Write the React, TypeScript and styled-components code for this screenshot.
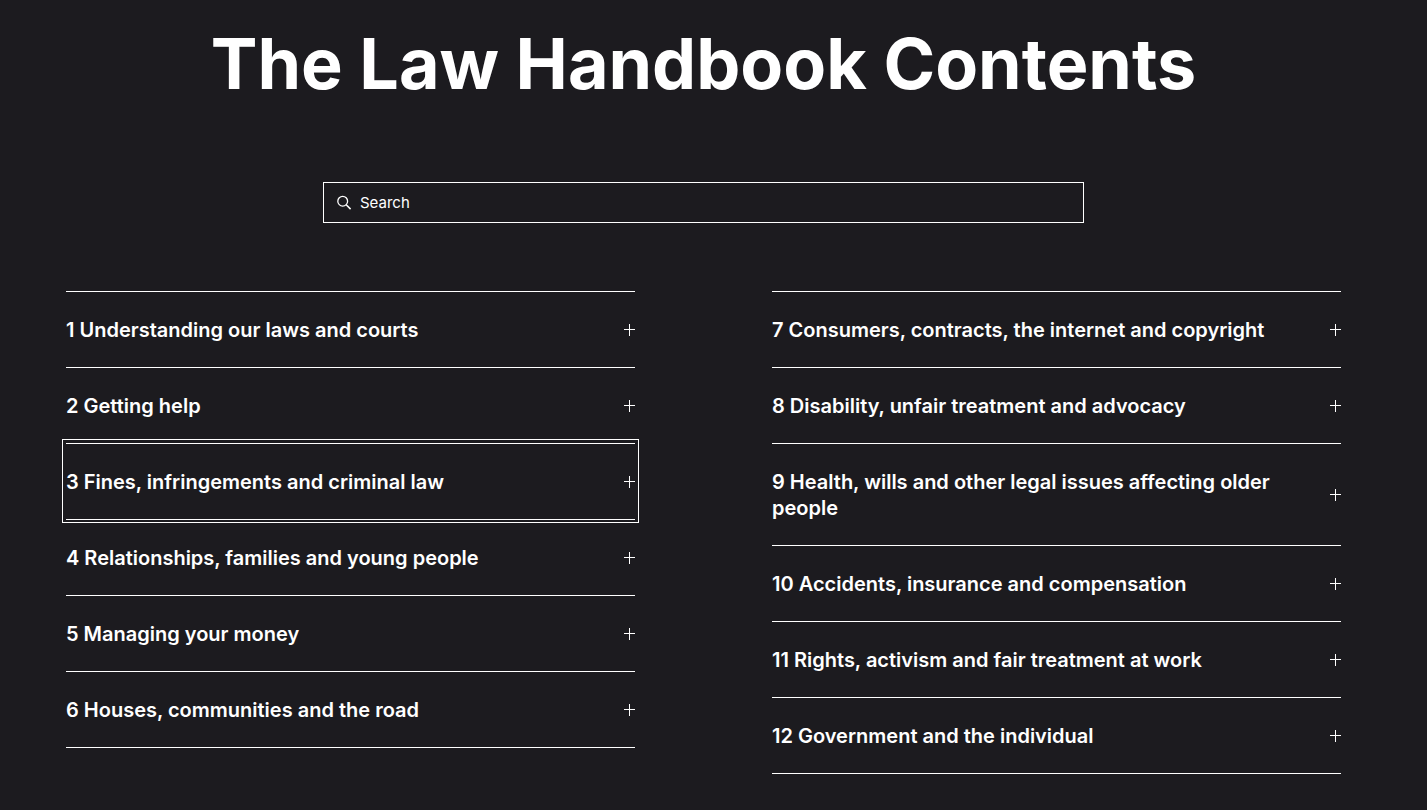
import React, { useState } from "react";
import styled, { createGlobalStyle } from "styled-components";

const GlobalStyle = createGlobalStyle`
  *, *::before, *::after { box-sizing: border-box; }
  body {
    margin: 0;
    background: #1c1b1f;
    color: #fff;
    font-family: Inter, "Liberation Sans", sans-serif;
  }
`;

const Page = styled.main`
  display: flex;
  flex-direction: column;
  align-items: center;
  padding: 24px 86px 36px 66px;
`;

const Title = styled.h1`
  margin: 0;
  font-size: 70px;
  line-height: 80px;
  font-weight: 700;
  text-align: center;
`;

const SearchBox = styled.label`
  display: flex;
  align-items: center;
  gap: 8px;
  width: 100%;
  max-width: 761px;
  height: 41px;
  margin: 78px 0 68px;
  padding: 0 13px;
  border: 1px solid #fff;
`;

const SearchInput = styled.input`
  flex: 1;
  min-width: 0;
  padding: 0;
  border: 0;
  outline: 0;
  background: transparent;
  color: #fff;
  font: 400 15px/24px Inter, "Liberation Sans", sans-serif;
  &::placeholder { color: #fff; opacity: 1; }
`;

const Columns = styled.div`
  display: grid;
  grid-template-columns: 1fr 1fr;
  align-items: start;
  column-gap: 137px;
  width: 100%;
`;

const ChapterList = styled.ul`
  margin: 0;
  padding: 0;
  list-style: none;
  border-bottom: 1px solid #fff;
`;

const ChapterButton = styled.button<{ $current: boolean }>`
  display: flex;
  align-items: center;
  justify-content: space-between;
  gap: 48px;
  width: 100%;
  padding: 25px 0 24px;
  border: 0;
  border-top: 1px solid #fff;
  outline: ${(p) => (p.$current ? "1px solid #fff" : "0")};
  outline-offset: 3px;
  background: transparent;
  color: #fff;
  font: 600 20px/26px Inter, "Liberation Sans", sans-serif;
  text-align: left;
  cursor: pointer;
`;

const PlusIcon = styled.svg`
  flex: none;
  width: 12px;
  height: 12px;
`;

const firstHalf = [
  "1 Understanding our laws and courts",
  "2 Getting help",
  "3 Fines, infringements and criminal law",
  "4 Relationships, families and young people",
  "5 Managing your money",
  "6 Houses, communities and the road",
];

const secondHalf = [
  "7 Consumers, contracts, the internet and copyright",
  "8 Disability, unfair treatment and advocacy",
  "9 Health, wills and other legal issues affecting older people",
  "10 Accidents, insurance and compensation",
  "11 Rights, activism and fair treatment at work",
  "12 Government and the individual",
];

export default function App() {
  const [current, setCurrent] = useState(firstHalf[2]);
  return (
    <>
      <GlobalStyle />
      <Page>
        <Title>The Law Handbook Contents</Title>
        <SearchBox>
          <svg width="15" height="15" viewBox="0 0 15 15" fill="none" stroke="#fff" aria-hidden="true">
            <circle cx="5.7" cy="6.2" r="4.9" strokeWidth="1.3" />
            <path d="M9.2 9.7 L13.6 14.1" strokeWidth="1.5" />
          </svg>
          <SearchInput type="search" placeholder="Search" aria-label="Search" />
        </SearchBox>
        <Columns>
          {[firstHalf, secondHalf].map((chapters) => (
            <ChapterList key={chapters[0]}>
              {chapters.map((name) => (
                <li key={name}>
                  <ChapterButton
                    type="button"
                    $current={name === current}
                    onClick={() => setCurrent(name)}
                  >
                    <span>{name}</span>
                    <PlusIcon viewBox="0 0 12 12" stroke="#fff" aria-hidden="true">
                      <path d="M0.5 5.5H12M6 0V11.5" strokeWidth="1" shapeRendering="crispEdges" />
                    </PlusIcon>
                  </ChapterButton>
                </li>
              ))}
            </ChapterList>
          ))}
        </Columns>
      </Page>
    </>
  );
}
